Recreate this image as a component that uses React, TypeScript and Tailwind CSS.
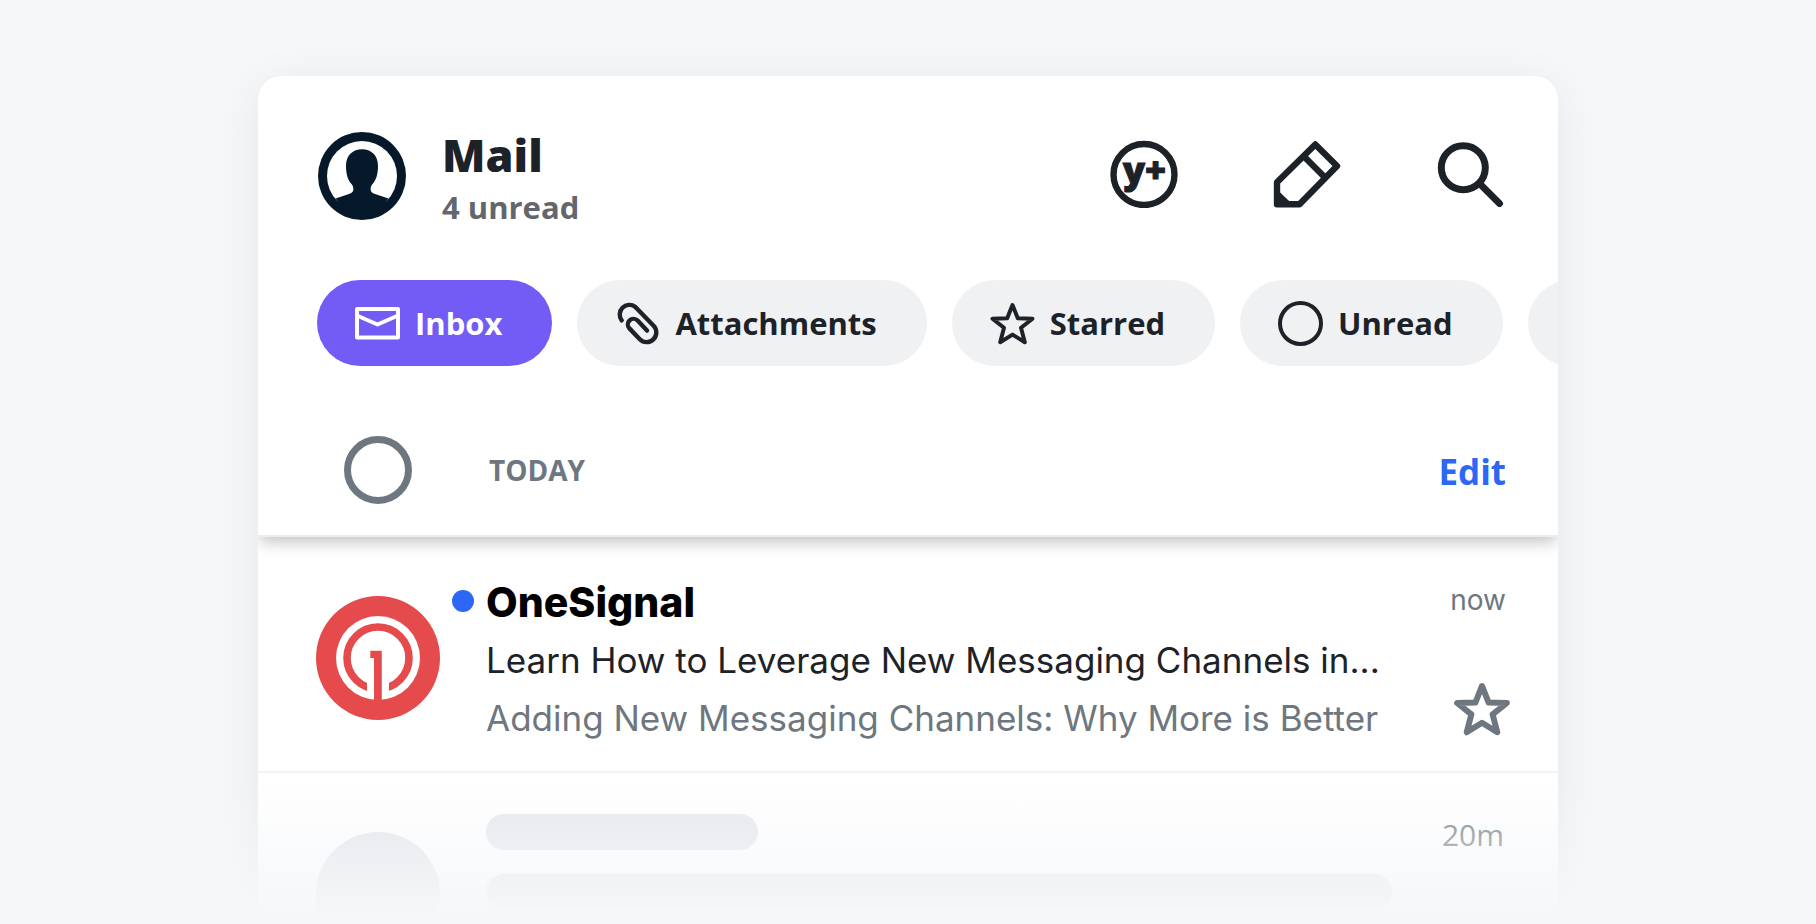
import { useState } from 'react';
import type { ReactNode } from 'react';

const StarIcon = ({ className, strokeWidth = 4 }: { className?: string; strokeWidth?: number }) => (
  <svg viewBox="0 0 45 45" className={className} fill="none" stroke="currentColor" strokeWidth={strokeWidth} strokeLinejoin="round">
    <path d="M22.5 4 27.8 17.3 42.5 17.7 31 26.8 34.8 41.2 22.5 33.6 10.2 41.2 14 26.8 2.5 17.7 17.2 17.3Z" />
  </svg>
);

const InboxIcon = () => (
  <svg viewBox="0 0 45 45" className="size-[45px] shrink-0" fill="none" stroke="currentColor" strokeWidth="4" strokeLinejoin="round">
    <rect x="2" y="8" width="41" height="28.5" />
    <path d="M3 15 22.5 23.5 42 15" />
  </svg>
);

const ClipIcon = () => (
  <svg viewBox="0 0 45 45" className="size-[45px] shrink-0" fill="none" stroke="currentColor" strokeWidth="4.4" strokeLinecap="round" strokeLinejoin="round">
    <path d="M6.7 19.3A9.6 9.6 0 0 1 20.1 5.8L38.6 24.8A9.6 9.6 0 0 1 24.8 38.2L14.4 27.4A5.6 5.6 0 0 1 22.6 19.6L32 29.6" />
  </svg>
);

const CircleIcon = () => (
  <svg viewBox="0 0 45 45" className="size-[45px] shrink-0" fill="none" stroke="currentColor" strokeWidth="4">
    <circle cx="22.5" cy="22.5" r="20.5" />
  </svg>
);

const ProfileIcon = () => (
  <svg viewBox="0 0 88 88" className="size-22">
    <circle cx="44" cy="44" r="44" fill="#05192b" />
    <circle cx="44" cy="44" r="35" fill="#fff" />
    <path
      fill="#05192b"
      d="M17.5 66.6 31 62C34.5 60.6 35.5 59.5 35.3 56.5 35.2 54 34.2 53 32.6 51 29 46.5 28 40 28 34 28 23 35 17.3 44 17.3S60 23 60 34C60 40 59 46.5 55.4 51 53.8 53 52.8 54 52.7 56.5 52.5 59.5 53.5 60.6 57 62L70.5 66.6C64 76 55 81 44 81S24 76 17.5 66.6Z"
    />
  </svg>
);

const YahooPlusIcon = () => (
  <svg viewBox="0 0 68 68" className="size-17">
    <circle cx="34" cy="34.5" r="30.5" fill="none" stroke="currentColor" strokeWidth="6.4" />
    <text x="13" y="43" fontSize="36" fontWeight="800" fill="currentColor" stroke="currentColor" strokeWidth="1.2">y+</text>
  </svg>
);

const PencilIcon = () => (
  <svg viewBox="0 0 68 68" className="size-17" fill="none" stroke="currentColor" strokeWidth="6.4" strokeLinejoin="round">
    <path d="M42.3 4.5 64 26 26.5 64.3H4V42.2Z" />
    <path d="M31 16.5 52.5 38" />
    <path d="M4 49.5V64.3H19.5Z" fill="currentColor" stroke="none" />
  </svg>
);

const SearchIcon = () => (
  <svg viewBox="0 0 68 68" className="size-17" fill="none" stroke="currentColor" strokeLinecap="round">
    <circle cx="27.3" cy="27.7" r="22" strokeWidth="7" />
    <path d="M44 44 63.5 63.5" strokeWidth="6.8" />
  </svg>
);

const OneSignalLogo = () => (
  <svg viewBox="0 0 124 124" className="size-31">
    <circle cx="62" cy="62" r="62" fill="#e54b4d" />
    <circle cx="62" cy="62" r="42" fill="#fff" />
    <circle cx="62" cy="62" r="31" fill="none" stroke="#e54b4d" strokeWidth="7.6" />
    <rect x="51" y="66" width="22" height="31" fill="#fff" />
    <path d="M54.3 54.7H65.8V108H58V62H54.3Z" fill="#e54b4d" />
  </svg>
);

const filters: { label: string; icon: ReactNode }[] = [
  { label: 'Inbox', icon: <InboxIcon /> },
  { label: 'Attachments', icon: <ClipIcon /> },
  { label: 'Starred', icon: <StarIcon className="size-[45px] shrink-0" /> },
  { label: 'Unread', icon: <CircleIcon /> },
];

const App = () => {
  const [active, setActive] = useState('Inbox');

  return (
    <div className="relative h-screen overflow-hidden bg-[#f5f7f9] px-6 pt-19 font-['Open_Sans','Noto_Sans',sans-serif] text-[#1d2228]">
      <main className="mx-auto w-full max-w-[1300px] overflow-hidden rounded-t-3xl bg-white shadow-[0_8px_48px_rgba(0,0,0,0.07)]">
        <div className="border-b-2 border-[#eceeee] shadow-[0_8px_14px_-2px_rgba(0,0,0,0.22)]">
          <header className="flex items-start justify-between pt-14 pr-[54px] pl-15">
            <div className="flex items-start gap-9">
              <button type="button" aria-label="Account" className="rounded-full">
                <ProfileIcon />
              </button>
              <div>
                <h1 className="text-[45px] leading-[46px] font-extrabold">Mail</h1>
                <p className="text-[31px] leading-[58px] font-bold text-[#63676d]">4 unread</p>
              </div>
            </div>
            <div className="flex gap-[95px] pt-2">
              <button type="button" aria-label="Yahoo Plus"><YahooPlusIcon /></button>
              <button type="button" aria-label="Compose"><PencilIcon /></button>
              <button type="button" aria-label="Search"><SearchIcon /></button>
            </div>
          </header>

          {/* Filter pills */}
          <nav className="mt-11 flex gap-[25px] overflow-hidden pl-[59px]">
            {filters.map(({ label, icon }) => (
              <button
                key={label}
                type="button"
                onClick={() => setActive(label)}
                className={`flex h-[86px] shrink-0 items-center gap-[15px] rounded-full pr-[50px] pl-[38px] text-[31px] font-bold ${
                  active === label ? 'bg-[#725cf5] text-white' : 'bg-[#f0f1f3]'
                }`}
              >
                {icon}
                {label}
              </button>
            ))}
            <button type="button" aria-label="More" className="h-[86px] w-60 shrink-0 rounded-full bg-[#f0f1f3]" />
          </nav>

          <div className="flex items-center justify-between pt-[70px] pr-[52px] pb-[31px] pl-[86px]">
            <label className="flex items-center gap-[77px] text-[28px] font-bold text-[#6e7780]">
              <input type="checkbox" className="size-17 appearance-none rounded-full border-[7px] border-[#6e7780] checked:bg-[#6e7780]" />
              TODAY
            </label>
            <button type="button" className="pt-1 text-[35px] leading-[48px] font-bold text-[#2c67f6]">Edit</button>
          </div>
        </div>

        <article className="flex border-b-2 border-[#f0f2f3] pt-9 pr-12 pb-6 pl-[58px] font-['Inter',sans-serif] leading-[58px]">
          <div className="mt-[23px] shrink-0">
            <OneSignalLogo />
          </div>
          <span className="mx-3 mt-[17px] size-[22px] shrink-0 rounded-full bg-[#2c67f6]" />
          <div className="min-w-0 flex-1 whitespace-nowrap">
            <h2 className="text-[41px] leading-[58px] font-extrabold text-black">OneSignal</h2>
            <p className="text-[35px] leading-[58px]">Learn How to Leverage New Messaging Channels in...</p>
            <p className="text-[35px] leading-[58px] text-[#6e7780]">Adding New Messaging Channels: Why More is Better</p>
          </div>
          <div className="flex w-[118px] shrink-0 flex-col items-end text-[#6e7780]">
            <time className="pr-1 text-[28px] leading-[54px]">now</time>
            <button type="button" aria-label="Star" className="mt-[54px]">
              <StarIcon className="size-14" strokeWidth={4.8} />
            </button>
          </div>
        </article>

        {/* Placeholder row */}
        <article className="flex pt-9 pr-12 pb-6 pl-[58px]">
          <div className="mt-[23px] size-31 shrink-0 rounded-full bg-[#e3e5e9]" />
          <div className="ml-[46px] min-w-0 flex-1">
            <div className="mt-[5px] h-9 w-[272px] rounded-full bg-[#e6e7eb]" />
            <div className="mt-6 h-9 rounded-full bg-[#e6e7eb]" />
          </div>
          <time className="w-[118px] shrink-0 pr-1.5 text-right text-[30px] leading-[52px] text-[#6e7780]">20m</time>
        </article>
      </main>

      <div className="pointer-events-none absolute inset-x-0 bottom-0 h-[146px] bg-linear-to-b from-[#f5f7f9]/0 to-[#f5f7f9] to-95%" />
    </div>
  );
};

export default App;
